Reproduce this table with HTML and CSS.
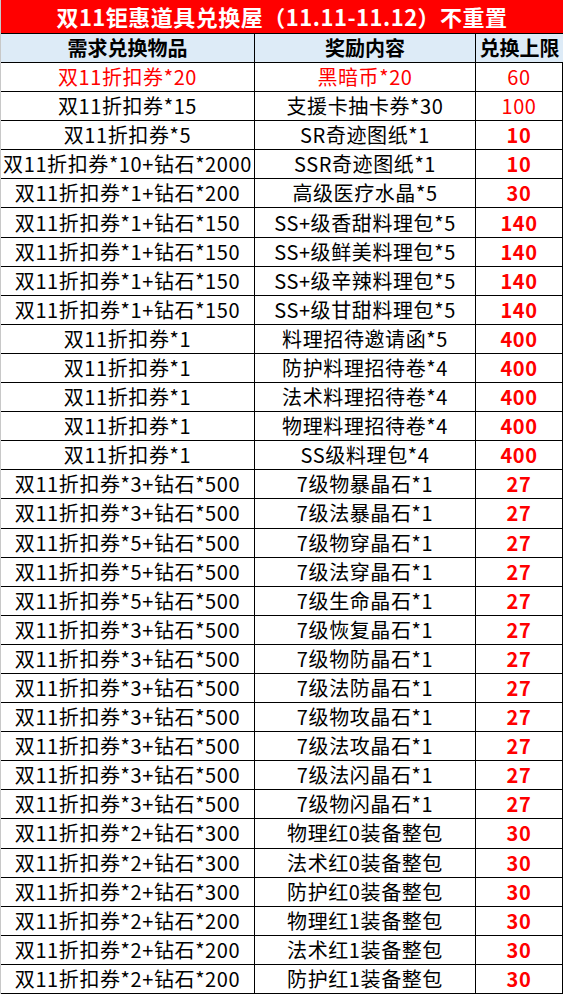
FILE: index.html
```html
<!DOCTYPE html>
<html lang="zh">
<head>
<meta charset="utf-8">
<title>双11钜惠道具兑换屋</title>
<link rel="stylesheet" href="styles.css">
</head>
<body>
<div class="sheet">
  <div class="title">双11钜惠道具兑换屋（11.11-11.12）不重置</div>
  <div class="head">需求兑换物品</div>
  <div class="head">奖励内容</div>
  <div class="head">兑换上限</div>

  <div class="cell red">双11折扣券*20</div><div class="cell red">黑暗币*20</div><div class="cell num red">60</div>
  <div class="cell">双11折扣券*15</div><div class="cell">支援卡抽卡券*30</div><div class="cell num red">100</div>
  <div class="cell">双11折扣券*5</div><div class="cell">SR奇迹图纸*1</div><div class="cell num bold">10</div>
  <div class="cell">双11折扣券*10+钻石*2000</div><div class="cell">SSR奇迹图纸*1</div><div class="cell num bold">10</div>
  <div class="cell">双11折扣券*1+钻石*200</div><div class="cell">高级医疗水晶*5</div><div class="cell num bold">30</div>
  <div class="cell">双11折扣券*1+钻石*150</div><div class="cell">SS+级香甜料理包*5</div><div class="cell num bold">140</div>
  <div class="cell">双11折扣券*1+钻石*150</div><div class="cell">SS+级鲜美料理包*5</div><div class="cell num bold">140</div>
  <div class="cell">双11折扣券*1+钻石*150</div><div class="cell">SS+级辛辣料理包*5</div><div class="cell num bold">140</div>
  <div class="cell">双11折扣券*1+钻石*150</div><div class="cell">SS+级甘甜料理包*5</div><div class="cell num bold">140</div>
  <div class="cell">双11折扣券*1</div><div class="cell">料理招待邀请函*5</div><div class="cell num bold">400</div>
  <div class="cell">双11折扣券*1</div><div class="cell">防护料理招待卷*4</div><div class="cell num bold">400</div>
  <div class="cell">双11折扣券*1</div><div class="cell">法术料理招待卷*4</div><div class="cell num bold">400</div>
  <div class="cell">双11折扣券*1</div><div class="cell">物理料理招待卷*4</div><div class="cell num bold">400</div>
  <div class="cell">双11折扣券*1</div><div class="cell">SS级料理包*4</div><div class="cell num bold">400</div>
  <div class="cell">双11折扣券*3+钻石*500</div><div class="cell">7级物暴晶石*1</div><div class="cell num bold">27</div>
  <div class="cell">双11折扣券*3+钻石*500</div><div class="cell">7级法暴晶石*1</div><div class="cell num bold">27</div>
  <div class="cell">双11折扣券*5+钻石*500</div><div class="cell">7级物穿晶石*1</div><div class="cell num bold">27</div>
  <div class="cell">双11折扣券*5+钻石*500</div><div class="cell">7级法穿晶石*1</div><div class="cell num bold">27</div>
  <div class="cell">双11折扣券*5+钻石*500</div><div class="cell">7级生命晶石*1</div><div class="cell num bold">27</div>
  <div class="cell">双11折扣券*3+钻石*500</div><div class="cell">7级恢复晶石*1</div><div class="cell num bold">27</div>
  <div class="cell">双11折扣券*3+钻石*500</div><div class="cell">7级物防晶石*1</div><div class="cell num bold">27</div>
  <div class="cell">双11折扣券*3+钻石*500</div><div class="cell">7级法防晶石*1</div><div class="cell num bold">27</div>
  <div class="cell">双11折扣券*3+钻石*500</div><div class="cell">7级物攻晶石*1</div><div class="cell num bold">27</div>
  <div class="cell">双11折扣券*3+钻石*500</div><div class="cell">7级法攻晶石*1</div><div class="cell num bold">27</div>
  <div class="cell">双11折扣券*3+钻石*500</div><div class="cell">7级法闪晶石*1</div><div class="cell num bold">27</div>
  <div class="cell">双11折扣券*3+钻石*500</div><div class="cell">7级物闪晶石*1</div><div class="cell num bold">27</div>
  <div class="cell">双11折扣券*2+钻石*300</div><div class="cell">物理红0装备整包</div><div class="cell num bold">30</div>
  <div class="cell">双11折扣券*2+钻石*300</div><div class="cell">法术红0装备整包</div><div class="cell num bold">30</div>
  <div class="cell">双11折扣券*2+钻石*300</div><div class="cell">防护红0装备整包</div><div class="cell num bold">30</div>
  <div class="cell">双11折扣券*2+钻石*200</div><div class="cell">物理红1装备整包</div><div class="cell num bold">30</div>
  <div class="cell">双11折扣券*2+钻石*200</div><div class="cell">法术红1装备整包</div><div class="cell num bold">30</div>
  <div class="cell">双11折扣券*2+钻石*200</div><div class="cell">防护红1装备整包</div><div class="cell num bold">30</div>
</div>
</body>
</html>
```

FILE: styles.css
```css
html, body {
  margin: 0;
  padding: 0;
  background: #ffffff;
}

body {
  width: 563px;
  height: 995px;
  overflow: hidden;
  font-family: "Noto Sans CJK SC", "Noto Sans", sans-serif;
  color: #000;
}

.sheet {
  display: grid;
  grid-template-columns: 254px 221px 87px;
  grid-template-rows: 34px 29px repeat(32, 29.1px);
  border-left: 1px solid #c8c8c8;
  width: 562px;
}

.title {
  grid-column: 1 / 4;
  background: #ff0000;
  color: #ffffff;
  font-weight: 700;
  font-size: 22px;
  letter-spacing: 0.5px;
  display: flex;
  align-items: center;
  justify-content: center;
  border-bottom: 1px solid #000;
  box-sizing: border-box;
  line-height: 1;
  padding-bottom: 1px;
}

.head {
  background: #ddebf7;
  font-weight: 700;
  font-size: 20px;
  display: flex;
  align-items: center;
  justify-content: center;
  border-right: 1px solid #000;
  border-bottom: 1px solid #000;
  box-sizing: border-box;
  line-height: 1;
}

.head:nth-child(4) {
  border-right: none;
}

.cell {
  font-size: 20px;
  letter-spacing: 0.6px;
  display: flex;
  align-items: center;
  justify-content: center;
  border-right: 1px solid #000;
  border-bottom: 1px solid #000;
  box-sizing: border-box;
  line-height: 1;
  white-space: nowrap;
}

.red {
  color: #ff0000;
}

.bold {
  color: #ff0000;
  font-weight: 700;
}
```
